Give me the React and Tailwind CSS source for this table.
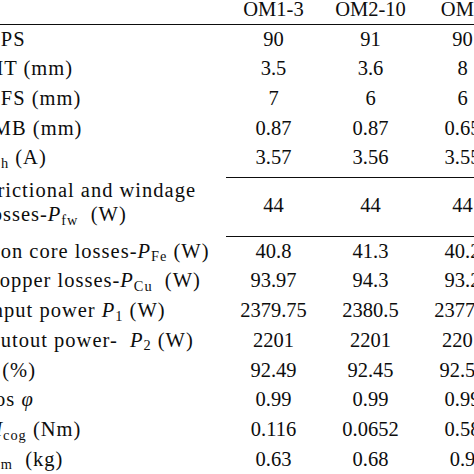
import React from 'react';

const cols = 'grid grid-cols-[241px_95px_99px_85px]';

const M = ({ v, s }) => (
  <>
    <i>{v}</i>
    {s && <sub className="text-[0.7em]">{s}</sub>}
  </>
);

const topRows = [
  { label: 'NPS', vals: ['90', '91', '90'] },
  { label: 'MT (mm)', vals: ['3.5', '3.6', '8'] },
  { label: 'NFS (mm)', vals: ['7', '6', '6'] },
  { label: 'IMB (mm)', vals: ['0.87', '0.87', '0.65'] },
  { label: <><M v="I" s="ph" /> (A)</>, vals: ['3.57', '3.56', '3.55'] },
];

const bottomRows = [
  { label: <>Iron core losses-<M v="P" s="Fe" /> (W)</>, vals: ['40.8', '41.3', '40.2'] },
  { label: <>Copper losses-<M v="P" s="Cu" />&nbsp; (W)</>, vals: ['93.97', '94.3', '93.2'] },
  { label: <>Input power <M v="P" s="1" /> (W)</>, vals: ['2379.75', '2380.5', '2377.5'] },
  { label: <>Outout power-&nbsp; <M v="P" s="2" /> (W)</>, vals: ['2201', '2201', '2201'] },
  { label: <><M v="η" /> (%)</>, vals: ['92.49', '92.45', '92.53'] },
  { label: <>cos <M v="φ" /></>, vals: ['0.99', '0.99', '0.99'] },
  { label: <><M v="M" s="cog" /> (Nm)</>, vals: ['0.116', '0.0652', '0.58'] },
  { label: <><M v="G" s="m" />&nbsp; (kg)</>, vals: ['0.63', '0.68', '0.9'] },
];

function Row({ label, vals, lead }) {
  return (
    <div className={`${cols} ${lead}`}>
      <div className="whitespace-nowrap tracking-[1px]">{label}</div>
      {vals.map((v, i) => (
        <div key={i} className="text-center whitespace-nowrap">{v}</div>
      ))}
    </div>
  );
}

export default function App() {
  return (
    <div className="w-[474px] h-[474px] overflow-hidden bg-white">
      <div className="-ml-[15px] w-[520px] font-['Liberation_Serif',serif] text-[20.5px] text-[#0d0d0d]">
        {/* header */}
        <div className={`${cols} h-[24.8px] border-b-[1.5px] border-[#0d0d0d] leading-[18px]`}>
          <div />
          <div className="text-center">OM1-3</div>
          <div className="text-center">OM2-10</div>
          <div className="text-center">OM3</div>
        </div>

        {topRows.map((r, i) => (
          <Row key={i} {...r} lead="leading-[29.6px]" />
        ))}

        <div className="h-[4.2px]" />
        <div className={cols}>
          <div />
          <div className="col-span-3 h-[1.4px] bg-[#0d0d0d]" />
        </div>

        {/* two-line row */}
        <div className={`${cols} h-[57.4px]`}>
          <div className="whitespace-nowrap tracking-[1px] leading-[24px]">
            Frictional and windage
            <br />
            losses-<M v="P" s="fw" />&nbsp; (W)
          </div>
          {['44', '44', '44'].map((v, i) => (
            <div key={i} className="text-center leading-[29.6px] pt-[13px]">{v}</div>
          ))}
        </div>

        <div className={cols}>
          <div />
          <div className="col-span-3 h-[1px] bg-[#0d0d0d]" />
        </div>

        {bottomRows.map((r, i) => (
          <Row key={i} {...r} lead="leading-[29.7px]" />
        ))}
      </div>
    </div>
  );
}
